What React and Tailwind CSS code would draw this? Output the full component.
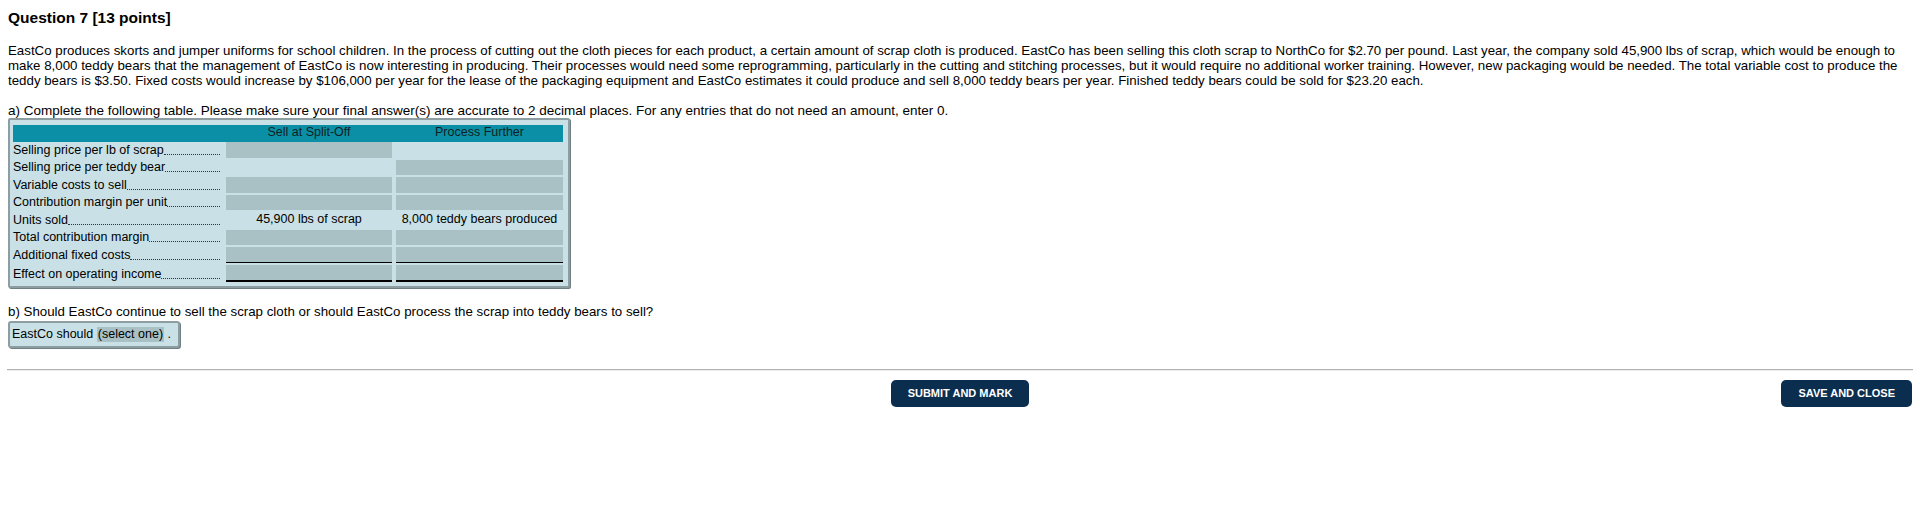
import React from "react";

const LINES = [
  "EastCo produces skorts and jumper uniforms for school children. In the process of cutting out the cloth pieces for each product, a certain amount of scrap cloth is produced. EastCo has been selling this cloth scrap to NorthCo for $2.70 per pound. Last year, the company sold 45,900 lbs of scrap, which would be enough to",
  "make 8,000 teddy bears that the management of EastCo is now interesting in producing. Their processes would need some reprogramming, particularly in the cutting and stitching processes, but it would require no additional worker training. However, new packaging would be needed. The total variable cost to produce the",
  "teddy bears is $3.50. Fixed costs would increase by $106,000 per year for the lease of the packaging equipment and EastCo estimates it could produce and sell 8,000 teddy bears per year. Finished teddy bears could be sold for $23.20 each.",
];

const ROWS = [
  { label: "Selling price per lb of scrap", a: "gray", b: "none", h: "h-[15.5px]" },
  { label: "Selling price per teddy bear", a: "none", b: "gray", h: "h-[15.5px]" },
  { label: "Variable costs to sell", a: "gray", b: "gray", h: "h-[15.5px]" },
  { label: "Contribution margin per unit", a: "gray", b: "gray", h: "h-[15.5px]" },
  { label: "Units sold", a: "45,900 lbs of scrap", b: "8,000 teddy bears produced", h: "h-[15.5px]" },
  { label: "Total contribution margin", a: "gray", b: "gray", h: "h-[15.5px]" },
  { label: "Additional fixed costs", a: "gray1", b: "gray1", h: "h-[16px]" },
  { label: "Effect on operating income", a: "gray2", b: "gray2", h: "h-[17px]" },
];

function Cell({ kind }) {
  if (kind === "none") return <div />;
  if (kind === "gray") return <div className="bg-[#a9c0c4]" />;
  if (kind === "gray1") return <div className="bg-[#a9c0c4] border-b border-black" />;
  if (kind === "gray2") return <div className="bg-[#a9c0c4] border-b-2 border-black" />;
  return (
    <div className="flex items-center justify-center whitespace-nowrap leading-[15px]">{kind}</div>
  );
}

export default function App() {
  return (
    <div className="w-[1920px] h-[510px] bg-white text-black overflow-hidden font-['Liberation_Sans',Arial,sans-serif]">
      <div className="px-[8px] pt-[9px]">
        <h2 className="text-[15.5px] font-bold leading-[18px] m-0">Question 7 [13 points]</h2>
        <div className="mt-[15.5px] text-[13.3px] leading-[15px]">
          {LINES.map((l, i) => (
            <div key={i} className="whitespace-nowrap">{l}</div>
          ))}
        </div>
        <div className="mt-[15px] text-[13.5px] leading-[15px] whitespace-nowrap">
          a) Complete the following table. Please make sure your final answer(s) are accurate to 2 decimal places. For any entries that do not need an amount, enter 0.
        </div>

        <div className="mt-[0.5px] w-[562px] border-2 border-[#8c9ea2] rounded-[2px] bg-[#c9e1e6] pl-[3px] pr-[5px] pt-[5px] pb-[4px] text-[12.5px] shadow-[1px_1px_0_#6f7f82]">
          <div className="grid grid-cols-[209px_166px_167px] gap-x-[4px] h-[17px] bg-[#0b8fa6] text-[#0f1f23] leading-[15px]">
            <div />
            <div className="text-center">Sell at Split-Off</div>
            <div className="text-center">Process Further</div>
          </div>
          <div className="grid grid-cols-[209px_166px_167px] gap-x-[4px] gap-y-[2px]">
            {ROWS.map((r, i) => (
              <React.Fragment key={i}>
                <div className={`${r.h} flex items-end leading-[15px]`}>
                  <span className="whitespace-nowrap">{r.label}</span>
                  <span className="flex-1 border-b border-dotted border-[#333] mb-[3px] mr-[2px]" />
                </div>
                <Cell kind={r.a} />
                <Cell kind={r.b} />
              </React.Fragment>
            ))}
          </div>
        </div>

        <div className="mt-[15.5px] text-[13.3px] leading-[15px] whitespace-nowrap">
          b) Should EastCo continue to sell the scrap cloth or should EastCo process the scrap into teddy bears to sell?
        </div>
        <div className="mt-[2.5px] w-[172px] h-[27px] border-2 border-[#8c9ea2] rounded-[3px] bg-[#c9e1e6] pl-[2px] flex items-center text-[12.5px] leading-[15px] whitespace-nowrap shadow-[1px_1px_0_#6f7f82]">
          <span>EastCo should&nbsp;</span>
          <span className="bg-[#a9c0c4] px-[1px]">(select one)</span>
          <span>&nbsp;.</span>
        </div>
      </div>

      <div className="mx-[7px] mt-[21px] border-t border-[#b4b4b4] border-b border-b-[#ececec]" />

      <div className="px-[8px] mt-[9px] grid grid-cols-[1fr_auto_1fr] items-center">
        <div />
        <button className="h-[27px] px-[17px] rounded-[5px] bg-[#0b2e4f] text-white text-[11px] font-bold leading-none">
          SUBMIT AND MARK
        </button>
        <div className="flex justify-end">
          <button className="h-[27px] px-[17px] rounded-[5px] bg-[#0b2e4f] text-white text-[11px] font-bold leading-none">
            SAVE AND CLOSE
          </button>
        </div>
      </div>
    </div>
  );
}
